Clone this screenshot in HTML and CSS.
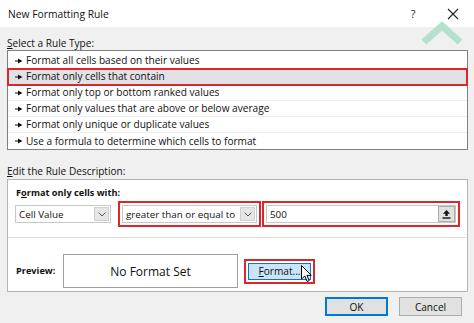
FILE: index.html
```html
<!DOCTYPE html>
<html>
<head>
<meta charset="utf-8">
<link rel="stylesheet" href="styles.css">
</head>
<body>
<div class="dialog">
  <div class="titlebar">
    <span class="title">New Formatting Rule</span>
    <span class="tbtn help">?</span>
    <span class="tbtn close"><svg width="12" height="12" viewBox="0 0 12 12"><path d="M1 1 L11 11 M11 1 L1 11" stroke="#222" stroke-width="1.1" fill="none"/></svg></span>
  </div>
  <div class="body">
    <div class="label"><u>S</u>elect a Rule Type:</div>
    <ul class="rules">
      <li><svg class="bul" width="8" height="6" viewBox="0 0 8 6"><path d="M0 3 H4" stroke="#111" stroke-width="1"/><path d="M3 0.5 L7.5 3 L3 5.5Z" fill="#111"/></svg>Format all cells based on their values</li>
      <li class="sel"><svg class="bul" width="8" height="6" viewBox="0 0 8 6"><path d="M0 3 H4" stroke="#111" stroke-width="1"/><path d="M3 0.5 L7.5 3 L3 5.5Z" fill="#111"/></svg>Format only cells that contain</li>
      <li><svg class="bul" width="8" height="6" viewBox="0 0 8 6"><path d="M0 3 H4" stroke="#111" stroke-width="1"/><path d="M3 0.5 L7.5 3 L3 5.5Z" fill="#111"/></svg>Format only top or bottom ranked values</li>
      <li><svg class="bul" width="8" height="6" viewBox="0 0 8 6"><path d="M0 3 H4" stroke="#111" stroke-width="1"/><path d="M3 0.5 L7.5 3 L3 5.5Z" fill="#111"/></svg>Format only values that are above or below average</li>
      <li><svg class="bul" width="8" height="6" viewBox="0 0 8 6"><path d="M0 3 H4" stroke="#111" stroke-width="1"/><path d="M3 0.5 L7.5 3 L3 5.5Z" fill="#111"/></svg>Format only unique or duplicate values</li>
      <li><svg class="bul" width="8" height="6" viewBox="0 0 8 6"><path d="M0 3 H4" stroke="#111" stroke-width="1"/><path d="M3 0.5 L7.5 3 L3 5.5Z" fill="#111"/></svg>Use a formula to determine which cells to format</li>
    </ul>
    <div class="label label2"><u>E</u>dit the Rule Description:</div>
    <div class="panel">
      <div class="cond">
        <div class="bold">F<u>o</u>rmat only cells with:</div>
        <div class="controls">
          <div class="select s1"><span class="val">Cell Value</span><span class="arrow"><svg width="8" height="5" viewBox="0 0 8 5"><path d="M0.5 0.5 L4 4 L7.5 0.5" fill="none" stroke="#555" stroke-width="1"/></svg></span></div>
          <div class="hl h2"><div class="select s2"><span class="val">greater than or equal to</span><span class="arrow"><svg width="8" height="5" viewBox="0 0 8 5"><path d="M0.5 0.5 L4 4 L7.5 0.5" fill="none" stroke="#555" stroke-width="1"/></svg></span></div></div>
          <div class="hl h3"><div class="input"><span class="val">500</span><span class="ref"><svg width="9" height="10" viewBox="0 0 9 10"><path d="M4.5 1 L1 4.8 H3.3 V7 H5.7 V4.8 H8Z" fill="#111"/><path d="M0.5 9 H8.5" stroke="#111" stroke-width="1.4"/></svg></span></div></div>
        </div>
      </div>
      <div class="preview-row">
        <span class="bold plabel">Preview:</span>
        <div class="preview">No Format Set</div>
        <div class="hl h4"><div class="fmt"><u>F</u>ormat...</div>
          <svg class="cursor" width="12" height="18" viewBox="0 0 12 18"><path d="M0.5 0.5 V14 L3.8 11 L6.2 16.5 L8.2 15.6 L5.9 10.3 H10.3Z" fill="#fff" stroke="#000" stroke-width="1"/></svg>
        </div>
      </div>
    </div>
    <div class="buttons">
      <div class="btn ok">OK</div>
      <div class="btn">Cancel</div>
    </div>
  </div>
  <svg class="watermark" width="44" height="24" viewBox="0 0 44 24"><polyline points="4,21 22,5 40,21" fill="none" stroke="#b4e0cd" stroke-width="7"/></svg>
</div>
</body>
</html>
```

FILE: styles.css
```css
* { box-sizing: border-box; }
html, body { margin: 0; padding: 0; }
body {
  width: 474px;
  height: 323px;
  overflow: hidden;
  background: #f0f0f0;
  font-family: "Open Sans", "Noto Sans", sans-serif;
  font-size: 10.1px;
  color: #111;
}
.dialog { width: 474px; height: 323px; position: relative; }
.titlebar {
  height: 27px;
  background: #fff;
  display: flex;
  align-items: center;
  padding-left: 8px;
  padding-right: 11px;
}
.title { font-size: 10.3px; color: #111; flex: 1; }
.tbtn {
  width: 20px;
  height: 20px;
  display: flex;
  align-items: center;
  justify-content: center;
  flex: none;
}
.help { font-size: 11px; color: #222; margin-right: 20px; }
.watermark { position: absolute; left: 420px; top: 21px; }
.body { padding: 9px 6px 0 7px; }
.label { height: 14px; line-height: 14px; }
.label u, .bold u, .fmt u { text-decoration: underline; text-underline-offset: 1px; }
.rules {
  list-style: none;
  margin: 0;
  padding: 2px 0 0 0;
  height: 100px;
  border: 1px solid #7f7f7f;
  background: #fff;
  width: 461px;
}
.rules li {
  height: 16px;
  line-height: 15px;
  display: flex;
  align-items: center;
  padding-left: 7px;
  border-bottom: 1px solid #eeeeee;
}
.rules li:last-child { border-bottom: none; }
.bul { margin-right: 3px; flex: none; }
.rules li.sel {
  background: #e1e1e6;
  outline: 2px solid #e0242c;
  outline-offset: -1px;
  position: relative;
}
.label2 { margin-top: 14px; }
.panel {
  margin-top: 1px;
  width: 461px;
  height: 113px;
  border: 1px solid #b5b5b5;
  background: #fff;
}
.cond { padding: 6px 7px 0 7px; height: 57px; }
.bold { font-weight: 700; font-size: 9.2px; line-height: 14px; padding-left: 1px; }
.controls { display: flex; align-items: center; margin-top: 1px; }
.select, .input {
  height: 18px;
  border: 1px solid #c8c8c8;
  background: #fff;
  display: flex;
  align-items: center;
  justify-content: space-between;
  padding-left: 3px;
  font-size: 9.8px;
}
.s1 { width: 98px; margin-right: 7px; }
.s2 { width: 135px; }
.input { width: 190px; }
.arrow, .ref {
  width: 15px;
  height: 14px;
  margin-right: 1px;
  background: #e6e6e6;
  border: 1px solid #d0d0d0;
  display: flex;
  align-items: center;
  justify-content: center;
}
.ref { width: 17px; height: 16px; margin-right: 0; border-color: #adadad; background: #e1e1e1; }
.hl { border: 2px solid #e0242c; padding: 2px; }
.h3 { margin-left: 1px; }
.preview-row {
  border-top: 1px solid #dedede;
  display: flex;
  align-items: center;
  padding: 13px 0 0 8px;
  height: 54px;
}
.plabel { width: 47px; padding-left: 0; }
.preview {
  width: 175px;
  height: 34px;
  border: 1px solid #a0a0a0;
  display: flex;
  align-items: center;
  justify-content: center;
  font-size: 12px;
}
.h4 { margin-left: 6px; position: relative; }
.fmt {
  width: 63px;
  height: 17px;
  background: #cce4f7;
  border: 1px solid #0078d7;
  display: flex;
  align-items: center;
  justify-content: center;
}
.cursor { position: absolute; left: 55px; top: 4px; }
.buttons {
  display: flex;
  justify-content: flex-end;
  gap: 11px;
  padding-right: 6px;
  margin-top: 5px;
}
.btn {
  width: 63px;
  height: 19px;
  background: #e1e1e1;
  border: 1px solid #adadad;
  display: flex;
  align-items: center;
  justify-content: center;
}
.btn.ok { border: 2px solid #0078d7; }
```
